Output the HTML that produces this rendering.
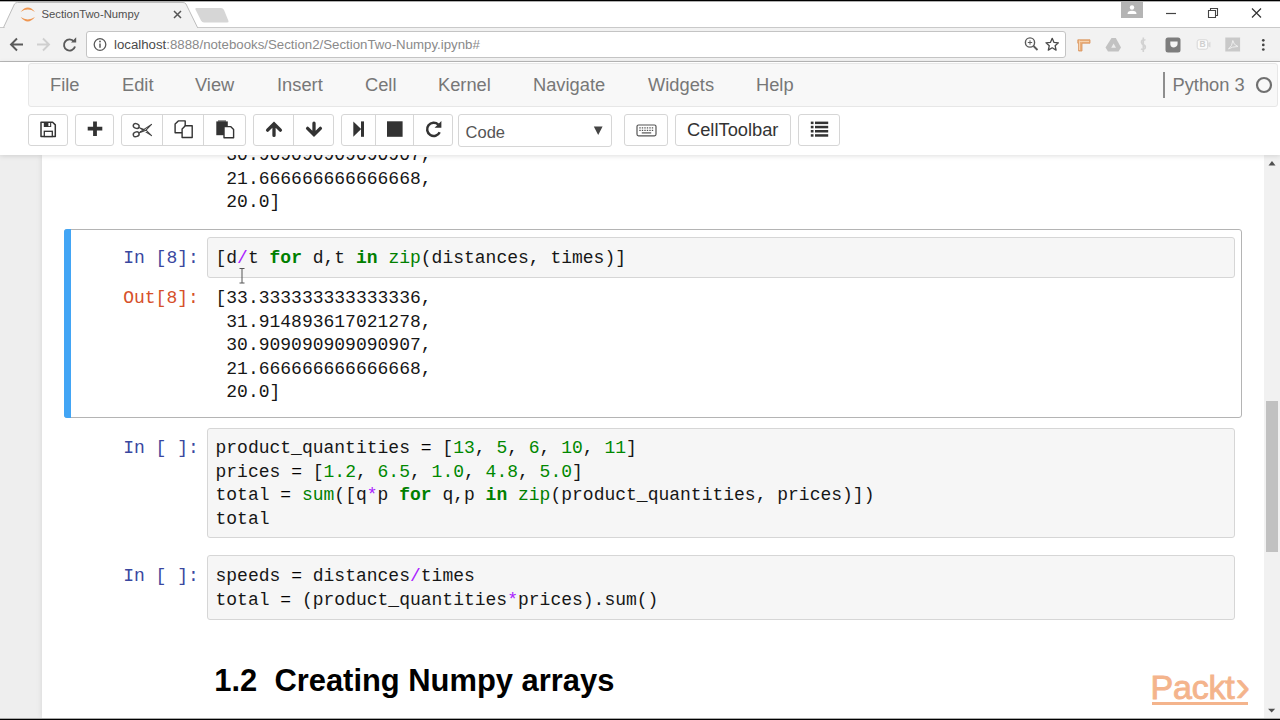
<!DOCTYPE html>
<html lang="en">
<head>
<meta charset="utf-8">
<title>SectionTwo-Numpy</title>
<style>
*{box-sizing:border-box;margin:0;padding:0}
html,body{width:1280px;height:720px;overflow:hidden;background:#fff}
body{position:relative;font-family:"Liberation Sans",Arial,sans-serif;color:#333}
.abs{position:absolute}
#topline{left:0;top:0;width:1280px;height:2px;background:linear-gradient(#000 0,#000 1px,#b0b0b0 1px,#b0b0b0 2px)}
#botline{left:0;top:718px;width:1280px;height:2px;background:linear-gradient(#a8a8a8 0,#a8a8a8 1px,#000 1px,#000 2px)}
#tabstrip{left:0;top:2px;width:1280px;height:25px;background:#fff}
#chrometb{left:0;top:27px;width:1280px;height:35px;background:#f2f2f2;border-top:1px solid #c9c9c9;border-bottom:1px solid #b9b9b9}
#urlbox{left:86px;top:31px;width:980px;height:27px;background:#fff;border:1px solid #c4c4c4;border-radius:3px}
#urltext{left:114px;top:36px;font-size:13.25px;line-height:17px;color:#8a8a8a;white-space:nowrap;letter-spacing:0}
#urltext b{font-weight:normal;color:#4a4a4a}
#tabtitle{left:41.5px;top:7px;font-size:11.3px;line-height:15px;color:#4f4f4f;white-space:nowrap}
/* page */
#site{left:0;top:155px;width:1264px;height:563px;background:#eee}
#nb{left:42px;top:155px;width:1222px;height:563px;background:#fff;box-shadow:0 0 6px rgba(0,0,0,.10)}
#header{left:0;top:62px;width:1280px;height:93px;background:#fff;box-shadow:0 1px 5px rgba(0,0,0,.13)}
#menubar{left:28px;top:63px;width:1250px;height:44px;background:#f8f8f8;border:1px solid #e7e7e7;border-radius:3px}
.mi{position:absolute;top:74px;font-size:18.3px;line-height:22px;color:#777;white-space:nowrap}
.btn{position:absolute;top:114px;height:32px;background:#fff;border:1px solid #d6d6d6;border-radius:3px}
.sep{position:absolute;top:0;width:1px;height:30px;background:#d6d6d6}
.ico{position:absolute}
/* scrollbar */
#sbar{left:1264px;top:155px;width:16px;height:563px;background:#f1f1f1}
#sthumb{left:1266px;top:401px;width:12px;height:151px;background:#c1c1c1}
/* cells */
.mono{font-family:"Liberation Mono","DejaVu Sans Mono",monospace;font-size:18px;line-height:23.5px;white-space:pre;color:#161616}
.inarea{position:absolute;left:207px;width:1028px;background:#f6f6f6;border:1px solid #d6d6d6;border-radius:3px}
.prompt{position:absolute;left:123.2px}
.pin{color:#3a479f}
.pout{color:#d6502a}
.code{position:absolute;left:215.5px}
.k{color:#008000;font-weight:bold}
.b{color:#008000}
.n{color:#080}
.o{color:#aa22ff}
.e{color:#000}
#selcell{left:64px;top:229px;width:1178px;height:189px;border:1px solid #b4b4b4;border-radius:3px;background:#fff}
#selbar{left:64px;top:229px;width:7px;height:189px;background:#42a5f5;border-radius:3px 0 0 3px}
#h2{left:214.3px;top:662.5px;font-size:30.9px;line-height:36px;font-weight:bold;color:#000;white-space:pre}
#packt{left:1150.5px;top:667px;font-size:34px;line-height:40px;color:#f4b48c;white-space:nowrap;letter-spacing:-0.2px;-webkit-text-stroke:0.9px #f4b48c}
#packt i{font-style:normal;position:absolute;left:85px;top:-1px;font-size:44px;-webkit-text-stroke:0.6px #f4b48c}
#packtline{left:1152px;top:702px;width:96px;height:3px;background:#f4b48c}
</style>
</head>
<body>
<!-- browser chrome -->
<div id="tabstrip" class="abs"></div>
<div id="chrometb" class="abs"></div>
<svg class="abs" style="left:0;top:0" width="1280" height="62" viewBox="0 0 1280 62">
  <!-- active tab -->
  <path d="M3.5 27.5 L14.5 4 Q15.5 2.5 17.5 2.5 L183 2.5 Q185 2.5 186 4 L197.5 27.5 Z" fill="#f2f2f2" stroke="#bdbdbd" stroke-width="1"/>
  <rect x="4.5" y="27" width="192.5" height="1.4" fill="#f2f2f2"/>
  <!-- new tab button -->
  <path d="M196 8 L221 8 Q223 8 224 10 L228.5 21 Q229 22.5 227 22.5 L204 22.5 Q202 22.5 201 20.5 L195.5 9.5 Q195 8 196 8 Z" fill="#d6d6d6"/>
  <!-- favicon -->
  <path d="M20.600 11.900 Q27.800 3 35 11.900 Q27.800 7 20.600 11.900 Z" fill="#ef9650"/>
  <path d="M20.600 17 Q27.800 21.900 35 17 Q27.800 25.900 20.600 17 Z" fill="#ef9650"/>
  <!-- tab close -->
  <path d="M174 11 L181 18 M181 11 L174 18" stroke="#555" stroke-width="1.5" fill="none"/>
  <!-- back -->
  <path d="M23 44.5 H11.5 M17 38.5 L11 44.5 L17 50.5" stroke="#5a5a5a" stroke-width="1.9" fill="none"/>
  <!-- forward -->
  <path d="M37 44.5 H48.5 M43 38.5 L49 44.5 L43 50.5" stroke="#cfcfcf" stroke-width="1.9" fill="none"/>
  <!-- reload -->
  <path d="M74 41.5 A5.6 5.6 0 1 0 75 46.5" stroke="#5a5a5a" stroke-width="1.9" fill="none"/>
  <path d="M71 42.5 L76.2 42.5 L76.2 37.3 Z" fill="#5a5a5a"/>
  <!-- window controls -->
  <rect x="1121" y="2" width="22" height="16" fill="#b4b4b4"/>
  <circle cx="1132" cy="7.5" r="2.2" fill="#fff"/>
  <path d="M1127.5 14 Q1127.5 10.8 1132 10.8 Q1136.500 10.8 1136.5 14 Z" fill="#fff"/>
  <path d="M1166 13.500 H1176" stroke="#444" stroke-width="1.2"/>
  <path d="M1208.500 10.500 H1215.500 V17.500 H1208.500 Z M1210.500 10.500 V8.500 H1217.500 V15.500 H1215.500" stroke="#444" stroke-width="1.1" fill="none"/>
  <path d="M1252 8.500 L1261 17.500 M1261 8.500 L1252 17.500" stroke="#333" stroke-width="1.2" fill="none"/>
</svg>
<div id="tabtitle" class="abs">SectionTwo-Numpy</div>
<div id="urlbox" class="abs"></div>
<div id="urltext" class="abs"><b>localhost</b>:8888/notebooks/Section2/SectionTwo-Numpy.ipynb#</div>
<svg class="abs" style="left:0;top:28px" width="1280" height="34" viewBox="0 28 1280 34">
  <!-- info icon -->
  <circle cx="100" cy="44.500" r="5.800" fill="none" stroke="#5a5a5a" stroke-width="1.300"/>
  <path d="M100 43.500 V47.800" stroke="#5a5a5a" stroke-width="1.500"/>
  <circle cx="100" cy="41.500" r="0.900" fill="#5a5a5a"/>
  <!-- zoom icon -->
  <circle cx="1030" cy="42.500" r="4.600" fill="none" stroke="#5a5a5a" stroke-width="1.400"/>
  <path d="M1033.500 46 L1037.500 50" stroke="#5a5a5a" stroke-width="1.800"/>
  <path d="M1027.800 42.500 H1032.200 M1030 40.300 V44.700" stroke="#5a5a5a" stroke-width="1"/>
  <!-- star -->
  <path d="M1052.200 38.300 L1054 42.400 L1058.400 42.800 L1055.100 45.700 L1056.100 50.100 L1052.200 47.800 L1048.300 50.100 L1049.300 45.700 L1046 42.800 L1050.400 42.400 Z" fill="none" stroke="#4a4a4a" stroke-width="1.300" stroke-linejoin="round"/>
  <!-- extensions -->
  <path d="M1077.800 39.800 H1090 V43.200 H1082 V51 H1078.600 V43.200 H1077.800 Z" fill="#eab07c" stroke="#d9935a" stroke-width="0.800"/>
  <path d="M1079.500 40.500 V50 M1080 41.500 H1089" stroke="#f6d3b0" stroke-width="1" fill="none"/>
  <path d="M1111.500 38 L1115.800 38 L1121 47.500 L1118.500 51.500 L1108 51.500 L1105.500 47.500 Z" fill="#c2c2c2"/>
  <path d="M1113.600 43.500 L1116 47.800 L1111.200 47.800 Z" fill="#ececec"/>
  <path d="M1145.500 40 Q1141 39 1141.500 42.500 Q1142 44.500 1144 45 Q1146 46 1145 48.500 Q1143.500 50 1141 49 M1143.300 37.500 V52" stroke="#d2d2d2" stroke-width="1.600" fill="none"/>
  <rect x="1165.500" y="37.500" width="15" height="15" rx="2.500" fill="#7d7d7d"/>
  <path d="M1170.300 41.500 H1177.600 V44 Q1177.200 47.200 1173 47.500 Q1170.300 46.800 1170.300 44.500 Z" fill="#f4f4f4"/>
  <rect x="1197.200" y="39.800" width="10.500" height="9.400" rx="2" fill="#fbfbfb" stroke="#d6d6d6" stroke-width="1"/>
  <path d="M1208.200 43 L1210.500 41.700 V47.600 L1208.200 46.300 Z" fill="#dcdcdc"/>
  <rect x="1225.300" y="37.500" width="14.800" height="14" fill="#c9c9c9"/>
  <path d="M1228.500 49 Q1232.500 46 1232.800 40.500 Q1233.500 45 1238 46.500 Q1232 46.500 1228.500 49 Z" fill="none" stroke="#eeeeee" stroke-width="1"/>
  <circle cx="1263.300" cy="40.300" r="1.350" fill="#444"/>
  <circle cx="1263.300" cy="44.900" r="1.350" fill="#444"/>
  <circle cx="1263.300" cy="49.500" r="1.350" fill="#444"/>
</svg>
<div class="abs" style="left:1199.600px;top:39.300px;font-size:8.500px;line-height:11px;font-weight:bold;color:#cfcfcf">B</div>

<!-- page -->
<div id="site" class="abs"></div>
<div id="nb" class="abs"></div>
<div id="sbar" class="abs"></div>
<div id="sthumb" class="abs"></div>
<svg class="abs" style="left:1264px;top:155px" width="16" height="563" viewBox="0 0 16 563">
  <path d="M4.500 10.500 L8 6 L11.500 10.500 Z" fill="#505050"/>
  <path d="M4.100 553.700 L7.650 557.400 L11.200 553.700 Z" fill="#505050"/>
</svg>

<!-- notebook content -->
<div id="content" class="abs" style="left:0;top:0;width:1264px;height:718px;overflow:hidden">
  <div class="mono code" style="top:144.3px"> 30.909090909090907,
 21.666666666666668,
 20.0]</div>

  <div id="selcell" class="abs"></div>
  <div id="selbar" class="abs"></div>
  <div class="inarea" style="top:237px;height:41px"></div>
  <div class="mono prompt pin" style="top:246.8px">In [8]:</div>
  <div class="mono code" style="top:246.8px">[d<span class="o">/</span>t <span class="k">for</span> d,t <span class="k">in</span> <span class="b">zip</span>(distances, times)]</div>
  <div class="mono prompt pout" style="top:287.3px">Out[8]:</div>
  <div class="mono code" style="top:287.3px">[33.333333333333336,
 31.914893617021278,
 30.909090909090907,
 21.666666666666668,
 20.0]</div>

  <div class="inarea" style="top:428px;height:110px"></div>
  <div class="mono prompt pin" style="top:437.0px">In [ ]:</div>
  <div class="mono code" style="top:437.0px">product_quantities <span class="e">=</span> [<span class="n">13</span>, <span class="n">5</span>, <span class="n">6</span>, <span class="n">10</span>, <span class="n">11</span>]
prices <span class="e">=</span> [<span class="n">1.2</span>, <span class="n">6.5</span>, <span class="n">1.0</span>, <span class="n">4.8</span>, <span class="n">5.0</span>]
total <span class="e">=</span> <span class="b">sum</span>([q<span class="o">*</span>p <span class="k">for</span> q,p <span class="k">in</span> <span class="b">zip</span>(product_quantities, prices)])
total</div>

  <div class="inarea" style="top:555px;height:65px"></div>
  <div class="mono prompt pin" style="top:565.2px">In [ ]:</div>
  <div class="mono code" style="top:565.2px">speeds <span class="e">=</span> distances<span class="o">/</span>times
total <span class="e">=</span> (product_quantities<span class="o">*</span>prices).sum()</div>

  <div id="h2" class="abs">1.2  Creating Numpy arrays</div>
</div>

<!-- notebook header -->
<div id="header" class="abs"></div>
<div id="menubar" class="abs"></div>
<div class="mi" style="left:50px">File</div>
<div class="mi" style="left:122px">Edit</div>
<div class="mi" style="left:195px">View</div>
<div class="mi" style="left:277px">Insert</div>
<div class="mi" style="left:365px">Cell</div>
<div class="mi" style="left:438px">Kernel</div>
<div class="mi" style="left:533px">Navigate</div>
<div class="mi" style="left:648px">Widgets</div>
<div class="mi" style="left:756px">Help</div>
<div class="abs" style="left:1163.2px;top:72px;width:1.6px;height:26px;background:#8e8e8e"></div>
<div class="mi" style="left:1172.5px;top:73.6px;color:#777">Python 3</div>
<svg class="abs" style="left:1253.75px;top:74.75px" width="20" height="20" viewBox="0 0 20 20"><circle cx="10" cy="10" r="7" fill="none" stroke="#707070" stroke-width="2.2"/></svg>

<!-- toolbar buttons -->
<div class="btn" style="left:28px;width:40px"></div>
<div class="btn" style="left:75px;width:39px"></div>
<div class="btn" style="left:121px;width:125px"><i class="sep" style="left:40px"></i><i class="sep" style="left:81px"></i></div>
<div class="btn" style="left:253px;width:81px"><i class="sep" style="left:39px"></i></div>
<div class="btn" style="left:341px;width:112px"><i class="sep" style="left:33px"></i><i class="sep" style="left:71px"></i></div>
<div class="btn" style="left:458px;width:154px;height:33px"></div>
<div class="abs" style="left:465.6px;top:120.9px;font-size:16.5px;line-height:22px;color:#555">Code</div>
<div class="btn" style="left:624px;width:44px"></div>
<div class="btn" style="left:675px;width:116px"></div>
<div class="abs" style="left:687px;top:119px;font-size:18.300px;line-height:22px;color:#333">CellToolbar</div>
<div class="btn" style="left:798px;width:42px"></div>

<svg class="abs" style="left:0;top:110px" width="860" height="40" viewBox="0 110 860 40">
  <g fill="#333" stroke="none">
    <!-- save -->
    <path d="M41 122.200 H52.600 L55.300 124.900 V136.500 H41 Z" fill="#fff" stroke="#333" stroke-width="1.500" stroke-linejoin="round"/>
    <rect x="43.800" y="122.200" width="7.400" height="4.800"/>
    <rect x="48.400" y="123" width="1.700" height="3.100" fill="#fff"/>
    <rect x="44.300" y="131.300" width="8" height="5.200" fill="#fff" stroke="#333" stroke-width="1.300"/>
    <!-- plus -->
    <path d="M93.100 121.400 H96.900 V126.800 H102.300 V130.600 H96.900 V136 H93.100 V130.600 H87.700 V126.800 H93.100 Z"/>
    <!-- step forward -->
    <path d="M353.300 121.400 L361.200 129.100 L353.300 136.800 Z"/>
    <rect x="361" y="121.400" width="3" height="15.400"/>
    <!-- stop -->
    <rect x="387" y="121.300" width="15.600" height="15.500"/>
    <!-- list -->
    <rect x="810.800" y="121.600" width="2.700" height="2.500"/><rect x="815" y="121.600" width="13.200" height="2.500"/>
    <rect x="810.800" y="125.800" width="2.700" height="2.500"/><rect x="815" y="125.800" width="13.200" height="2.500"/>
    <rect x="810.800" y="130" width="2.700" height="2.500"/><rect x="815" y="130" width="13.200" height="2.500"/>
    <rect x="810.800" y="134.200" width="2.700" height="2.500"/><rect x="815" y="134.200" width="13.200" height="2.500"/>
    <!-- select arrow -->
    <path d="M593.800 126.500 H602.600 L598.200 135 Z" fill="#444"/>
  </g>
  <!-- arrows -->
  <g fill="none" stroke="#333" stroke-width="3.300" stroke-linejoin="miter" stroke-linecap="round">
    <path d="M274 135.400 V125.500 M267.600 130.200 L274 123.800 L280.400 130.200"/>
    <path d="M314 123.200 V133 M307.600 128.300 L314 134.700 L320.400 128.300"/>
  </g>
  <!-- restart -->
  <path d="M438.300 124.600 A6.600 6.600 0 1 0 439.700 132.200" fill="none" stroke="#333" stroke-width="2.500"/>
  <path d="M434.600 127.800 H441.400 V121 Z" fill="#333"/>
  <!-- scissors -->
  <g fill="none" stroke="#444" stroke-width="1.400">
    <ellipse cx="136.200" cy="126" rx="3" ry="2.300" transform="rotate(22 136.200 126)"/>
    <ellipse cx="136.200" cy="134.300" rx="3" ry="2.300" transform="rotate(-22 136.200 134.300)"/>
    <path d="M138.800 127.400 L151.500 135.600 L146 130.200 Z M138.800 132.900 L151.500 124.400 L146 130.200 Z" stroke-width="1.100" stroke-linejoin="round"/>
  </g>
  <!-- copy -->
  <g fill="#fff" stroke="#333" stroke-width="1.400" stroke-linejoin="round">
    <path d="M178.300 120.900 H185.200 V132.800 H175.100 V124.100 Z"/>
    <path d="M185.300 125.800 H192.200 V137.500 H182.100 V129 Z"/>
  </g>
  <!-- paste -->
  <rect x="216.300" y="121.400" width="11.500" height="13.800" fill="#333"/>
  <rect x="218" y="120.400" width="8" height="1.600" fill="#555"/>
  <path d="M224 126.600 H230.600 L233.600 129.600 V137.700 H224 Z" fill="#fff" stroke="#333" stroke-width="1.400" stroke-linejoin="round"/>
  <!-- keyboard -->
  <rect x="637" y="125" width="19" height="10.800" rx="1.500" fill="none" stroke="#555" stroke-width="1.200"/>
  <path d="M639.300 127.800 H654 M639.300 130.300 H654" stroke="#555" stroke-width="1.200" stroke-dasharray="1.400 1.100"/>
  <path d="M641.800 132.900 H651.200" stroke="#555" stroke-width="1.200"/>
</svg>

<!-- I-beam cursor -->
<svg class="abs" style="left:237px;top:267px" width="10" height="18" viewBox="0 0 10 18"><path d="M2.500 1.500 H7.500 M5 1.500 V16 M2.500 16 H7.500" stroke="#555" stroke-width="1" fill="none"/></svg>

<!-- watermark -->
<div id="packt" class="abs">Packt<i>&rsaquo;</i></div>
<div id="packtline" class="abs"></div>

<div id="topline" class="abs"></div>
<div id="botline" class="abs"></div>
</body>
</html>
